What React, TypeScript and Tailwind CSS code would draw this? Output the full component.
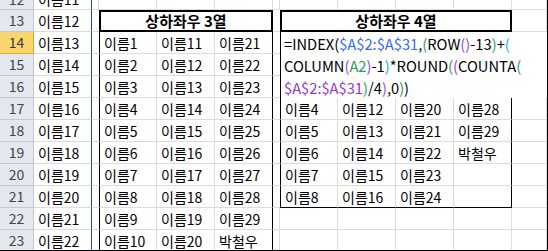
const grid = "border-[#dadcdd]";

type Tok = [string, string];

const line1: Tok[] = [
  ["=INDEX(", "text-black"],
  ["$A$2:$A$31", "text-[#3366ff]"],
  [",", "text-black"],
  ["(", "text-[#2e9b5a]"],
  ["ROW", "text-black"],
  ["()", "text-[#a63fd6]"],
  ["-13", "text-black"],
  [")", "text-[#2e9b5a]"],
  ["+", "text-black"],
  ["(", "text-[#1ab0d8]"],
];
const line2: Tok[] = [
  ["COLUMN", "text-black"],
  ["(", "text-[#a63fd6]"],
  ["A2", "text-[#2e9b5a]"],
  [")", "text-[#a63fd6]"],
  ["-1", "text-black"],
  [")", "text-[#1ab0d8]"],
  ["*ROUND", "text-black"],
  ["(", "text-[#2e9b5a]"],
  ["(", "text-[#a63fd6]"],
  ["COUNTA", "text-black"],
  ["(", "text-[#2e9b5a]"],
];
const line3: Tok[] = [
  ["$A$2:$A$31", "text-[#9933cc]"],
  [")", "text-[#2e9b5a]"],
  ["/4", "text-black"],
  [")", "text-[#a63fd6]"],
  [",0", "text-black"],
  [")", "text-[#2e9b5a]"],
  [")", "text-black"],
];

function RowHead({ n, active }: { n: number; active?: boolean }) {
  return (
    <div
      className={`flex items-center justify-center border-r border-b text-[14px] ${
        active
          ? "bg-[#f8d66d] border-[#e3a33a] text-[#3b3b3b]"
          : "bg-[#e4e8ee] border-[#c3c9d1] text-[#3e4650]"
      }`}
    >
      {n}
    </div>
  );
}

function Cell({ text, className = "" }: { text?: string; className?: string }) {
  return (
    <div
      className={`flex items-center overflow-hidden whitespace-nowrap pl-[4px] pt-[1px] text-[14px] text-black ${className}`}
    >
      {text}
    </div>
  );
}

function FormulaLine({ toks }: { toks: Tok[] }) {
  return (
    <div className="h-[22px] leading-[22px] whitespace-nowrap">
      {toks.map(([t, c], i) => (
        <span key={i} className={c}>
          {t}
        </span>
      ))}
    </div>
  );
}

export default function App() {
  const rows = [13, 14, 15, 16, 17, 18, 19, 20, 21, 22, 23];

  return (
    <div
      className="w-[548px] h-[251px] overflow-hidden border-r border-b border-black bg-white"
      style={{ fontFamily: '"Noto Sans CJK KR", "Noto Sans", sans-serif' }}
    >
      <div className="grid grid-cols-[34px_58px_7px_58px_58px_58px_7px_58px_58px_58px_58px_1fr] grid-rows-[10px_repeat(11,22px)]">
        {/* row 12, cut off at the top */}
        <div className="overflow-hidden border-r border-b border-[#c3c9d1] bg-[#e4e8ee]">
          <div className="-mt-[12px] flex h-[22px] items-center justify-center text-[14px] text-[#3e4650]">
            12
          </div>
        </div>
        <div className="overflow-hidden border-r border-b border-r-[#1f3cff] border-b-[#dadcdd]">
          <div className="-mt-[12px] flex h-[22px] items-center pl-[4px] pt-[1px] text-[14px]">
            이름11
          </div>
        </div>
        <div className={`border-r border-b ${grid}`} />
        <div className={`border-r border-b ${grid}`} />
        <div className={`border-r border-b ${grid}`} />
        <div className={`border-r border-b ${grid}`} />
        <div className={`border-r border-b ${grid}`} />
        <div className={`border-r border-b ${grid}`} />
        <div className={`border-r border-b ${grid}`} />
        <div className={`border-r border-b ${grid}`} />
        <div className={`border-r border-b ${grid}`} />
        <div className={`border-r border-b ${grid}`} />

        {rows.map((r) => {
          const inFour = r >= 13 && r <= 21;
          return [
            <RowHead key={`h${r}`} n={r} active={r === 14} />,
            <Cell
              key={`a${r}`}
              text={`이름${r - 1}`}
              className="border-r border-b border-r-[#1f3cff] border-b-[#dadcdd]"
            />,
            <div key={`b${r}`} className={`border-b ${grid}`} />,
            ...(r === 13
              ? [
                  <div
                    key="h3"
                    className="col-span-3 flex items-center justify-center border-2 border-black text-[15px] font-bold"
                  >
                    상하좌우 3열
                  </div>,
                ]
              : [
                  <Cell
                    key={`c${r}`}
                    text={`이름${r - 13}`}
                    className={`border-l border-r border-b border-l-black ${grid}`}
                  />,
                  <Cell
                    key={`d${r}`}
                    text={`이름${r - 3}`}
                    className={`border-r border-b ${grid}`}
                  />,
                  <Cell
                    key={`e${r}`}
                    text={r === 23 ? "박철우" : `이름${r + 7}`}
                    className={`border-r border-b border-r-black ${grid}`}
                  />,
                ]),
            <div
              key={`f${r}`}
              className={`border-b ${inFour ? "" : "border-r"} ${grid}`}
            />,
            ...(r === 13
              ? [
                  <div
                    key="h4"
                    className="col-span-4 flex items-center justify-center border-2 border-black text-[15px] font-bold"
                  >
                    상하좌우 4열
                  </div>,
                  <div key="k13" className={`border-r border-b ${grid}`} />,
                ]
              : r === 14
              ? [
                  <div
                    key="formula"
                    className="col-span-5 row-span-3 border-l border-black bg-white pl-[3px] pt-[1px] text-[14.7px]"
                  >
                    <FormulaLine toks={line1} />
                    <FormulaLine toks={line2} />
                    <FormulaLine toks={line3} />
                  </div>,
                ]
              : r === 15 || r === 16
              ? []
              : r <= 21
              ? [
                  <Cell
                    key={`g${r}`}
                    text={`이름${r - 13}`}
                    className={`border-l border-r border-b border-l-black ${grid} ${r === 21 ? "border-b-black" : ""}`}
                  />,
                  <Cell
                    key={`h${r}x`}
                    text={`이름${r - 5}`}
                    className={`border-r border-b ${grid} ${r === 21 ? "border-b-black" : ""}`}
                  />,
                  <Cell
                    key={`i${r}`}
                    text={`이름${r + 3}`}
                    className={`border-r border-b ${grid} ${r === 21 ? "border-b-black" : ""}`}
                  />,
                  <Cell
                    key={`j${r}`}
                    text={r === 17 ? "이름28" : r === 18 ? "이름29" : r === 19 ? "박철우" : ""}
                    className={`border-r border-b border-r-black ${grid} ${r === 21 ? "border-b-black" : ""}`}
                  />,
                  <div key={`k${r}`} className={`border-r border-b ${grid}`} />,
                ]
              : [
                  <div key={`g${r}`} className={`border-r border-b ${grid}`} />,
                  <div key={`h${r}x`} className={`border-r border-b ${grid}`} />,
                  <div key={`i${r}`} className={`border-r border-b ${grid}`} />,
                  <div key={`j${r}`} className={`border-r border-b ${grid}`} />,
                  <div key={`k${r}`} className={`border-r border-b ${grid}`} />,
                ]),
          ];
        })}
      </div>
    </div>
  );
}
